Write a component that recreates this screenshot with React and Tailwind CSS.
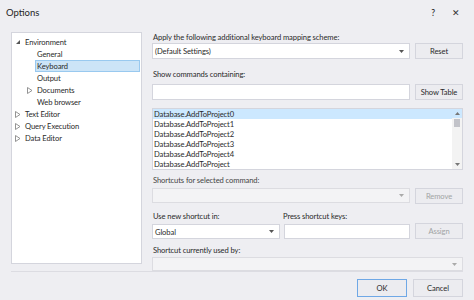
import React from "react";

const Tri = ({ open }) =>
  open ? (
    <svg width="6" height="6" viewBox="0 0 6 6" className="shrink-0">
      <path d="M5 1 L5 5 L1 5 Z" fill="#555" />
    </svg>
  ) : (
    <svg width="6" height="7" viewBox="0 0 6 7" className="shrink-0">
      <path d="M0.5 0.5 L5 3.5 L0.5 6.5 Z" fill="none" stroke="#888" strokeWidth="0.9" />
    </svg>
  );

const Arrow = ({ color = "#555" }) => (
  <svg width="5" height="3" viewBox="0 0 5 3">
    <path d="M0 0 L5 0 L2.5 3 Z" fill={color} />
  </svg>
);

const TreeRow = ({ indent, tri, open, label, selected }) => (
  <div className="flex items-center h-[12px]" style={{ paddingLeft: indent }}>
    <div className="w-[10px] flex items-center">{tri && <Tri open={open} />}</div>
    {selected ? (
      <div className="flex-1 h-[12px] bg-[#cce4f7] border border-[#99c9ef] flex items-center pl-[1px] -ml-[2px] mr-[1px]">
        {label}
      </div>
    ) : (
      <div>{label}</div>
    )}
  </div>
);

const Btn = ({ children, disabled, primary, w = "w-[48px]", h = "h-[16px]" }) => (
  <div
    className={`${w} ${h} flex items-center justify-center border ${
      primary ? "border-[#6fa8e6] bg-[#ececf0]" : "border-[#d4d5dd] bg-[#ececf0]"
    } ${disabled ? "text-[#a2a4a5]" : "text-[#2a2a2a]"}`}
  >
    {children}
  </div>
);

export default function App() {
  const cmds = [
    "Database.AddToProject0",
    "Database.AddToProject1",
    "Database.AddToProject2",
    "Database.AddToProject3",
    "Database.AddToProject4",
    "Database.AddToProject",
  ];
  return (
    <div
      className="w-[474px] h-[300px] bg-[#eeeef2] text-[#2a2a2a] text-[7.6px] tracking-[-0.1px] leading-[10px] flex flex-col overflow-hidden"
      style={{ fontFamily: 'Lato, "Noto Sans", sans-serif' }}
    >
      {/* title */}
      <div className="h-[26px] flex items-center pl-[6px] pr-[14px]">
        <div className="text-[9.5px] tracking-normal leading-[14px] flex-1 text-[#1e1e1e]">Options</div>
        <div className="text-[8.5px] font-semibold mr-[17px] text-[#333]">?</div>
        <div className="text-[8.5px] text-[#333]">✕</div>
      </div>

      <div className="flex px-[11px] pt-[6px]">
        {/* tree */}
        <div className="w-[131px] h-[232px] bg-white border border-[#d4d5dd] pt-[3px] pl-[3px]">
          <TreeRow indent={0} tri open label="Environment" />
          <TreeRow indent={12} label="General" />
          <TreeRow indent={12} label="Keyboard" selected />
          <TreeRow indent={12} label="Output" />
          <TreeRow indent={12} tri label="Documents" />
          <TreeRow indent={12} label="Web browser" />
          <TreeRow indent={0} tri label="Text Editor" />
          <TreeRow indent={0} tri label="Query Execution" />
          <TreeRow indent={0} tri label="Data Editor" />
        </div>

        {/* right panel */}
        <div className="ml-[10px] w-[311px] flex flex-col">
          <div className="h-[11px] pl-[1px]">Apply the following additional keyboard mapping scheme:</div>
          <div className="flex gap-[5px]">
            <div className="w-[258px] h-[16px] bg-white border border-[#d4d5dd] flex items-center pl-[2px] pr-[5px]">
              <div className="flex-1">(Default Settings)</div>
              <Arrow />
            </div>
            <Btn>Reset</Btn>
          </div>

          <div className="h-[10px] mt-[10px] pl-[1px]">Show commands containing:</div>
          <div className="flex gap-[5px] mt-[5px]">
            <div className="w-[258px] h-[16px] bg-white border border-[#d4d5dd]" />
            <Btn>Show Table</Btn>
          </div>

          <div className="mt-[8px] w-[311px] h-[62px] bg-white border border-[#d4d5dd] flex">
            <div className="flex-1 flex flex-col">
              {cmds.map((c, i) => (
                <div
                  key={c}
                  className={`h-[10px] pl-[1px] ${i === 0 ? "bg-[#cce8ff]" : ""}`}
                >
                  {c}
                </div>
              ))}
            </div>
            <div className="w-[10px] bg-[#f3f3f3] flex flex-col items-center">
              <div className="h-[9px] flex items-center justify-center bg-[#cce8ff] w-full">
                <svg width="5" height="3" viewBox="0 0 5 3"><path d="M0 3 L5 3 L2.5 0 Z" fill="#777" /></svg>
              </div>
              <div className="w-[6px] h-[8px] bg-[#c2c3c9] mt-[1px]" />
              <div className="flex-1" />
              <div className="h-[9px] flex items-center justify-center">
                <Arrow color="#777" />
              </div>
            </div>
          </div>

          <div className="h-[10px] mt-[5px] pl-[1px] text-[#444]">Shortcuts for selected command:</div>
          <div className="flex gap-[5px] mt-[3px]">
            <div className="w-[258px] h-[15px] bg-[#f3f3f5] border border-[#dcdce1] flex items-center justify-end pr-[5px]">
              <Arrow color="#aaa" />
            </div>
            <Btn disabled>Remove</Btn>
          </div>

          <div className="flex mt-[7px] h-[10px]">
            <div className="w-[131px] pl-[1px]">Use new shortcut in:</div>
            <div>Press shortcut keys:</div>
          </div>
          <div className="flex mt-[3px] items-start">
            <div className="w-[128px] h-[15px] bg-white border border-[#d4d5dd] flex items-center pl-[2px] pr-[5px]">
              <div className="flex-1">Global</div>
              <Arrow />
            </div>
            <div className="ml-[4px] w-[126px] h-[15px] bg-white border border-[#d4d5dd]" />
            <div className="ml-[5px] -mt-[1px]">
              <Btn disabled>Assign</Btn>
            </div>
          </div>

          <div className="h-[10px] mt-[6px] pl-[1px]">Shortcut currently used by:</div>
          <div className="mt-[2px] w-[311px] h-[14px] bg-[#f3f3f5] border border-[#dcdce1] flex items-center justify-end pr-[5px]">
            <Arrow color="#aaa" />
          </div>
        </div>
      </div>

      <div className="mx-[11px] h-px bg-[#dcdce2]" />

      <div className="flex justify-end pr-[11px] pt-[7px] gap-[6px]">
        <Btn primary w="w-[50px]" h="h-[18px]">OK</Btn>
        <Btn w="w-[50px]" h="h-[18px]">Cancel</Btn>
      </div>
    </div>
  );
}
